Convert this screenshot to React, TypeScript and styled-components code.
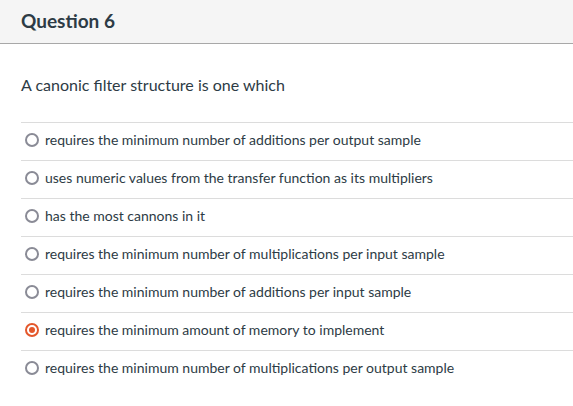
import React from "react";
import styled, { createGlobalStyle } from "styled-components";

const Global = createGlobalStyle`
  html, body { margin: 0; padding: 0; background: #fff; }
  body { font-family: Lato, "Open Sans", sans-serif; color: #2d3b45; }
`;

const Page = styled.div`
  width: 573px;
  height: 406px;
  overflow: hidden;
  background: #fff;
`;

const Header = styled.div`
  background: #f5f5f5;
  border-bottom: 1px solid #a8a8a8;
  display: flex;
  align-items: center;
  padding-left: 21px;
  padding-bottom: 2px;
  box-sizing: border-box;
  height: 44px;
`;

const Title = styled.h2`
  margin: 0;
  font-size: 19px;
  font-weight: 700;
  color: #2d3b45;
`;

const Body = styled.div`
  padding: 0 0 0 21px;
`;

const QuestionText = styled.p`
  margin: 0;
  padding: 31px 0 0;
  height: 47px;
  font-size: 16px;
  line-height: 20px;
  color: #2d3b45;
`;

const List = styled.div`
  display: flex;
  flex-direction: column;
`;

const Row = styled.label`
  display: flex;
  align-items: center;
  gap: 6px;
  border-top: 1px solid #dcdcdc;
  padding-left: 4px;
  padding-bottom: 4px;
  box-sizing: border-box;
  height: 38px;
  font-size: 14px;
  color: #2d3b45;
`;

const Radio = styled.span<{ $checked?: boolean }>`
  width: 14px;
  height: 14px;
  box-sizing: border-box;
  border-radius: 50%;
  border: 2px solid ${(p) => (p.$checked ? "#e4572b" : "#8a8b96")};
  display: flex;
  align-items: center;
  justify-content: center;
  flex-shrink: 0;
  &::after {
    content: "";
    display: ${(p) => (p.$checked ? "block" : "none")};
    width: 6px;
    height: 6px;
    border-radius: 50%;
    background: #e4572b;
  }
`;

const answers = [
  "requires the minimum number of additions per output sample",
  "uses numeric values from the transfer function as its multipliers",
  "has the most cannons in it",
  "requires the minimum number of multiplications per input sample",
  "requires the minimum number of additions per input sample",
  "requires the minimum amount of memory to implement",
  "requires the minimum number of multiplications per output sample",
];

export default function App() {
  return (
    <Page>
      <Global />
      <Header>
        <Title>Question 6</Title>
      </Header>
      <Body>
        <QuestionText>A canonic filter structure is one which</QuestionText>
        <List>
          {answers.map((a, i) => (
            <Row key={i}>
              <Radio $checked={i === 5} />
              <span>{a}</span>
            </Row>
          ))}
        </List>
      </Body>
    </Page>
  );
}
